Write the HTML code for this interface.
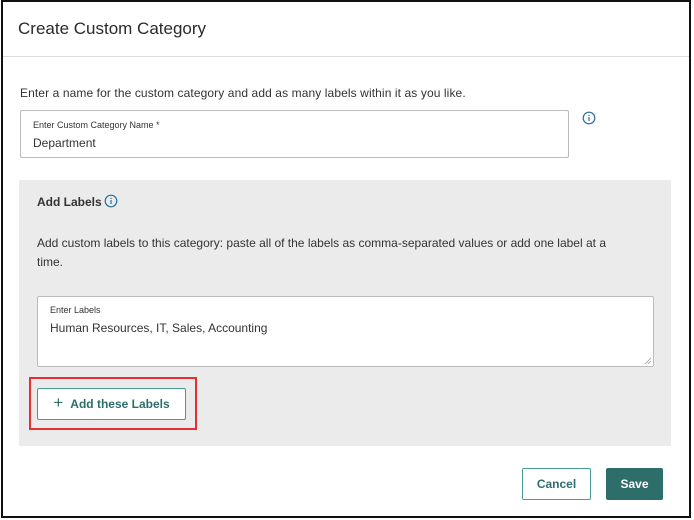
<!DOCTYPE html>
<html><head><style>
*{box-sizing:border-box;margin:0;padding:0}
body{width:694px;height:520px;background:#fff;font-family:"Liberation Sans",sans-serif;position:relative;overflow:hidden;color:#222}
.frame{position:absolute;left:1px;top:0;width:690px;height:518px;border:2px solid #111}
.abs{position:absolute}
</style></head><body>
<div class="frame"></div>
<div class="abs" style="left:18px;top:19px;font-size:17px;color:#2a2a2a">Create Custom Category</div>
<div class="abs" style="left:3px;top:56px;width:686px;height:1px;background:#ddd"></div>
<div class="abs" style="left:20px;top:86px;font-size:12px;color:#333;letter-spacing:0.1px">Enter a name for the custom category and add as many labels within it as you like.</div>
<div class="abs" style="left:20px;top:110px;width:549px;height:48px;border:1px solid #bbb;border-radius:2px"></div>
<div class="abs" style="left:33px;top:120px;font-size:9px;color:#333">Enter Custom Category Name *</div>
<div class="abs" style="left:33px;top:136px;font-size:12px;color:#333">Department</div>
<svg class="abs" style="left:582px;top:111px" width="14" height="14" viewBox="0 0 14 14"><circle cx="7" cy="7" r="5.8" fill="none" stroke="#2a6f9a" stroke-width="1.2"/><rect x="6.4" y="6" width="1.2" height="4" fill="#2a6f9a"/><rect x="6.4" y="3.8" width="1.2" height="1.2" fill="#2a6f9a"/></svg>
<div class="abs" style="left:19px;top:180px;width:652px;height:266px;background:#ebebeb"></div>
<div class="abs" style="left:37px;top:195px;font-size:12px;font-weight:bold;color:#333">Add Labels</div>
<svg class="abs" style="left:104px;top:194px" width="14" height="14" viewBox="0 0 14 14"><circle cx="7" cy="7" r="5.8" fill="none" stroke="#2a6f9a" stroke-width="1.2"/><rect x="6.4" y="6" width="1.2" height="4" fill="#2a6f9a"/><rect x="6.4" y="3.8" width="1.2" height="1.2" fill="#2a6f9a"/></svg>
<div class="abs" style="left:37px;top:234px;width:588px;font-size:12px;line-height:19px;color:#333">Add custom labels to this category: paste all of the labels as comma-separated values or add one label at a time.</div>
<div class="abs" style="left:37px;top:296px;width:617px;height:71px;border:1px solid #bbb;background:#fff;border-radius:2px"></div>
<div class="abs" style="left:50px;top:305px;font-size:9px;color:#333">Enter Labels</div>
<div class="abs" style="left:50px;top:321px;font-size:12px;color:#333">Human Resources, IT, Sales, Accounting</div>
<svg class="abs" style="left:644px;top:357px" width="8" height="8"><path d="M7 1L1 7M7 4L4 7" stroke="#999" stroke-width="0.8"/></svg>
<div class="abs" style="left:29px;top:377px;width:168px;height:53px;border:2px solid #e53030"></div>
<div class="abs" style="left:37px;top:388px;width:149px;height:32px;border:1px solid #4a9a94;background:#fff;border-radius:2px;color:#2e6e6a;font-size:12px;font-weight:bold;display:flex;align-items:center;justify-content:center"><span style="font-size:17px;font-weight:normal;margin-right:7px;margin-top:-2px">+</span>Add these Labels</div>
<div class="abs" style="left:522px;top:468px;width:69px;height:32px;border:1px solid #4a9a94;border-radius:2px;color:#2e6e6a;font-size:12px;font-weight:bold;display:flex;align-items:center;justify-content:center">Cancel</div>
<div class="abs" style="left:606px;top:468px;width:57px;height:32px;background:#2e6e6a;border-radius:2px;color:#fff;font-size:12px;font-weight:bold;display:flex;align-items:center;justify-content:center">Save</div>
</body></html>
